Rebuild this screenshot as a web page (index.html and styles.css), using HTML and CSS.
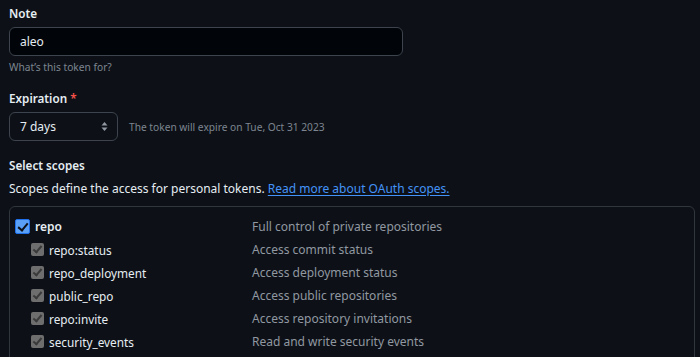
FILE: index.html
```html
<!DOCTYPE html>
<html lang="en">
<head>
    <meta charset="UTF-8">
    <title>New personal access token</title>
    <link rel="stylesheet" href="styles.css">
</head>
<body>
    <div class="form">
        <div class="group">
            <label class="label" for="note">Note</label>
            <input class="input" id="note" type="text" value="aleo">
            <p class="hint">What’s this token for?</p>
        </div>

        <div class="group">
            <label class="label">Expiration <span class="required">*</span></label>
            <div class="expire-row">
                <div class="select">
                    <span>7 days</span>
                    <svg class="arrows" width="7" height="11" viewBox="0 0 7 11">
                        <path d="M3.5 1 L6.5 4.5 H0.5 Z" fill="#9198a1"/>
                        <path d="M3.5 10 L6.5 6.5 H0.5 Z" fill="#9198a1"/>
                    </svg>
                </div>
                <span class="expire-note">The token will expire on Tue, Oct 31 2023</span>
            </div>
        </div>

        <h3 class="scopes-title">Select scopes</h3>
        <p class="scopes-desc">Scopes define the access for personal tokens. <a href="#">Read more about OAuth scopes.</a></p>

        <div class="scopes">
            <div class="scope main">
                <div class="scope-name"><span class="check check-on"></span>repo</div>
                <div class="scope-desc">Full control of private repositories</div>
            </div>
            <div class="scope sub">
                <div class="scope-name"><span class="check check-off"></span>repo:status</div>
                <div class="scope-desc">Access commit status</div>
            </div>
            <div class="scope sub">
                <div class="scope-name"><span class="check check-off"></span>repo_deployment</div>
                <div class="scope-desc">Access deployment status</div>
            </div>
            <div class="scope sub">
                <div class="scope-name"><span class="check check-off"></span>public_repo</div>
                <div class="scope-desc">Access public repositories</div>
            </div>
            <div class="scope sub">
                <div class="scope-name"><span class="check check-off"></span>repo:invite</div>
                <div class="scope-desc">Access repository invitations</div>
            </div>
            <div class="scope sub">
                <div class="scope-name"><span class="check check-off"></span>security_events</div>
                <div class="scope-desc">Read and write security events</div>
            </div>
        </div>
    </div>
</body>
</html>
```

FILE: styles.css
```css
html, body {
    margin: 0;
    height: 100%;
    overflow: hidden;
}
body {
    font-family: 'Noto Sans', 'Liberation Sans', sans-serif;
    font-size: 12px;
    color: #e6edf3;
    background-color: #0d1117;
}
.form {
    padding: 5px 5px 0 9px;
}
.group {
    margin-bottom: 16px;
}
.label {
    display: block;
    font-size: 11.7px;
    font-weight: 600;
    line-height: 16px;
    margin-bottom: 6px;
}
.required {
    color: #f85149;
}
.input {
    display: block;
    box-sizing: border-box;
    width: 394px;
    height: 29px;
    padding: 0 10px;
    font-family: inherit;
    font-size: 12px;
    color: #e6edf3;
    background: #010409;
    border: 1px solid #3d444d;
    border-radius: 6px;
    outline: none;
}
.hint {
    margin: 4px 0 0;
    font-size: 10.2px;
    line-height: 14px;
    color: #7d8590;
}
.expire-row {
    display: flex;
    align-items: center;
    gap: 11px;
}
.select {
    box-sizing: border-box;
    width: 109px;
    height: 29px;
    display: flex;
    align-items: center;
    justify-content: space-between;
    padding: 0 9px 0 10px;
    background: #0d1117;
    border: 1px solid #3d444d;
    border-radius: 6px;
}
.expire-note {
    font-size: 10.2px;
    color: #7d8590;
}
.scopes-title {
    margin: 0;
    font-size: 11.7px;
    font-weight: 600;
    line-height: 16px;
}
.scopes-desc {
    margin: 7px 0 0;
    line-height: 18px;
}
.scopes-desc a {
    color: #4493f8;
    text-decoration: underline;
    text-underline-offset: 2px;
}
.scopes {
    margin-top: 8px;
    border: 1px solid #30363d;
    border-radius: 6px;
    padding: 8px 0 0 5px;
    height: 200px;
}
.scope {
    display: flex;
    align-items: center;
    height: 23px;
}
.scope-name {
    width: 237px;
    display: flex;
    align-items: center;
    font-size: 11.8px;
}
.scope.sub .scope-name {
    padding-left: 16px;
    width: 221px;
}
.main .scope-name {
    font-weight: 600;
    font-size: 12px;
}
.scope-desc {
    color: #9198a1;
}
.check {
    box-sizing: border-box;
    display: inline-block;
    position: relative;
    margin-right: 5px;
}
.check-on {
    width: 15px;
    height: 15px;
    background: #5ba0f7;
    border: 1px solid #1f6feb;
    border-radius: 2px;
}
.check-on::after {
    content: "";
    position: absolute;
    left: 4px;
    top: 1px;
    width: 4px;
    height: 8px;
    border: solid #0d1117;
    border-width: 0 2px 2px 0;
    transform: rotate(40deg);
}
.check-off {
    width: 13px;
    height: 13px;
    background: #6e6e6e;
    border-radius: 2px;
}
.check-off::after {
    content: "";
    position: absolute;
    left: 4px;
    top: 1px;
    width: 3px;
    height: 7px;
    border: solid #3a3a3a;
    border-width: 0 2px 2px 0;
    transform: rotate(40deg);
}
```
